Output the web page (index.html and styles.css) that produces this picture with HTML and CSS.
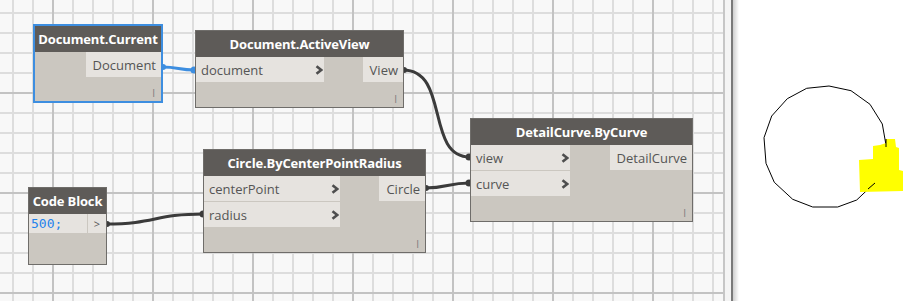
FILE: index.html
```html
<!DOCTYPE html>
<html lang="en">
<head>
<meta charset="utf-8">
<title>Dynamo graph</title>
<link rel="stylesheet" href="styles.css">
</head>
<body>
<div class="app">
  <div class="canvas">
    <svg class="wires" width="723" height="301" viewBox="0 0 723 301">
      <g fill="none" stroke-width="3" stroke-linecap="round">
        <path class="wire-sel" d="M162,67 C179,67 178,70 195,70"/>
        <path class="wire" d="M403,70 C450,70 425,157 470,157"/>
        <path class="wire" d="M425,188 C448,188 447,183 470,183"/>
        <path class="wire" d="M106,224 C156,224 154,214 204,214"/>
      </g>
      <g class="knob-sel">
        <circle cx="163" cy="67" r="3"/>
        <circle cx="194" cy="70" r="3.5"/>
      </g>
      <g class="knob">
        <circle cx="404" cy="70" r="3"/>
        <circle cx="469" cy="157" r="3.5"/>
        <circle cx="426" cy="188" r="3"/>
        <circle cx="469" cy="183" r="3.5"/>
        <circle cx="107" cy="224" r="3"/>
        <circle cx="203" cy="214" r="3.5"/>
      </g>
    </svg>

    <div class="node selected n-current">
      <div class="head">Document.Current</div>
      <div class="ports">
        <div class="inputs"></div>
        <div class="outputs"><div class="out">Document</div></div>
      </div>
      <div class="lace">I</div>
    </div>

    <div class="node n-view">
      <div class="head">Document.ActiveView</div>
      <div class="ports">
        <div class="inputs w128">
          <div class="in"><span>document</span><svg class="chev" width="8" height="10" viewBox="0 0 8 10"><path d="M1.5,1.2 L6.3,5 L1.5,8.8"/></svg></div>
        </div>
        <div class="outputs"><div class="out">View</div></div>
      </div>
      <div class="lace">I</div>
    </div>

    <div class="node n-detail">
      <div class="head">DetailCurve.ByCurve</div>
      <div class="ports">
        <div class="inputs w99">
          <div class="in"><span>view</span><svg class="chev" width="8" height="10" viewBox="0 0 8 10"><path d="M1.5,1.2 L6.3,5 L1.5,8.8"/></svg></div>
          <div class="in"><span>curve</span><svg class="chev" width="8" height="10" viewBox="0 0 8 10"><path d="M1.5,1.2 L6.3,5 L1.5,8.8"/></svg></div>
        </div>
        <div class="outputs"><div class="out">DetailCurve</div></div>
      </div>
      <div class="lace">I</div>
    </div>

    <div class="node n-code">
      <div class="head">Code Block</div>
      <div class="code-row">
        <div class="code">500;</div>
        <div class="code-out">&gt;</div>
      </div>
    </div>

    <div class="node n-circle">
      <div class="head">Circle.ByCenterPointRadius</div>
      <div class="ports">
        <div class="inputs w136">
          <div class="in"><span>centerPoint</span><svg class="chev" width="8" height="10" viewBox="0 0 8 10"><path d="M1.5,1.2 L6.3,5 L1.5,8.8"/></svg></div>
          <div class="in"><span>radius</span><svg class="chev" width="8" height="10" viewBox="0 0 8 10"><path d="M1.5,1.2 L6.3,5 L1.5,8.8"/></svg></div>
        </div>
        <div class="outputs"><div class="out">Circle</div></div>
      </div>
      <div class="lace">I</div>
    </div>
  </div>
  <div class="gutter"></div>
  <div class="splitter"></div>
  <div class="shadow"></div>
  <div class="preview">
    <svg class="view3d" width="171" height="301" viewBox="739 0 171 301">
      <polygon class="geom" points="829,86 851,90.7 870,104.3 882.3,124 885.7,143.3 887,163 875,182.7 856.7,200 837.7,207 812.7,207 792.7,199.3 774.3,182.3 766,163.3 764,137.7 771.7,116 787.3,98.7 806.7,88.3"/>
      <polygon class="hilite" points="886,139 895,139 896,147 899,148 899,170 903,171 903,191 860,192 859,160 873,159 873,146 880,145 886,143"/>
      <line class="geom" x1="875" y1="183" x2="868" y2="189"/>
      <line class="geom" x1="886" y1="139" x2="886" y2="147"/>
    </svg>
  </div>
</div>
</body>
</html>
```

FILE: styles.css
```css
html, body {
  margin: 0;
  padding: 0;
  background: #ffffff;
}

body {
  font-family: "Open Sans", "DejaVu Sans", sans-serif;
  width: 910px;
  height: 301px;
  overflow: hidden;
}

.app {
  display: flex;
  width: 910px;
  height: 301px;
}

.canvas {
  position: relative;
  flex: 0 0 723px;
  height: 301px;
  box-sizing: content-box;
  border-right: 2px solid #c6c6c6;
  background-color: #f8f8f8;
  background-image:
    linear-gradient(to right, #c3c3c3 2px, transparent 2px),
    linear-gradient(to bottom, #c3c3c3 2px, transparent 2px),
    linear-gradient(to right, #dddddd 2px, transparent 2px),
    linear-gradient(to bottom, #dddddd 2px, transparent 2px);
  background-size: 100px 100%, 100% 100px, 20px 100%, 100% 20px;
  background-position: 52px 0, 0 92px, 12px 0, 0 12px;
  overflow: hidden;
}

.gutter {
  flex: 0 0 6px;
  background: #f4f4f4;
}

.splitter {
  flex: 0 0 2px;
  background: #7a7a7a;
}

.shadow {
  flex: 0 0 6px;
  background: linear-gradient(to right, #cfcfcf, #ffffff);
}

.preview {
  flex: 1;
  background: #ffffff;
}

.view3d {
  display: block;
}

.geom {
  fill: none;
  stroke: #000000;
  stroke-width: 1;
}

.hilite {
  fill: #ffff00;
  stroke: none;
}

/* wires */
.wires {
  position: absolute;
  left: 0;
  top: 0;
}

.wire {
  stroke: #3b3b3b;
}

.wire-sel {
  stroke: #3d8ee0;
}

.knob circle {
  fill: #3b3b3b;
}

.knob-sel circle {
  fill: #3d8ee0;
}

/* nodes */
.node {
  position: absolute;
  box-sizing: border-box;
  display: flex;
  flex-direction: column;
  background: #cbc7c0;
  border: 1px solid #6f6d6a;
}

.node.selected {
  border: 2px solid #3d8ee0;
}

.n-current { left: 33px; top: 24px; width: 130px; height: 79px; }
.n-view    { left: 195px; top: 30px; width: 209px; height: 78px; }
.n-detail  { left: 470px; top: 118px; width: 223px; height: 104px; }
.n-code    { left: 28px; top: 187px; width: 79px; height: 78px; }
.n-circle  { left: 203px; top: 149px; width: 223px; height: 104px; }

.head {
  flex: 0 0 26px;
  display: flex;
  align-items: center;
  justify-content: center;
  background: #5e5b58;
  color: #ffffff;
  font-weight: 700;
  font-size: 13px;
  white-space: nowrap;
  letter-spacing: -0.15px;
}

.ports {
  display: flex;
  justify-content: space-between;
  align-items: flex-start;
}

.inputs {
  display: flex;
  flex-direction: column;
  gap: 1px;
}

.w128 { width: 128px; }
.w99  { width: 99px; }
.w136 { width: 136px; }

.in {
  height: 25px;
  box-sizing: border-box;
  display: flex;
  align-items: center;
  justify-content: space-between;
  padding: 0 1px 0 5px;
  background: #e6e3df;
  color: #555555;
  font-size: 13px;
  white-space: nowrap;
}

.chev path {
  fill: none;
  stroke: #4e4e4e;
  stroke-width: 2.6;
  stroke-linejoin: miter;
}

.outputs {
  display: flex;
  flex-direction: column;
}

.out {
  height: 25px;
  box-sizing: border-box;
  display: flex;
  align-items: center;
  justify-content: flex-end;
  padding: 0 5px 0 7px;
  background: #e6e3df;
  color: #555555;
  font-size: 13px;
  white-space: nowrap;
}

.lace {
  margin-top: auto;
  align-self: flex-end;
  padding: 0 6px 2px 0;
  font-size: 10px;
  line-height: 12px;
  color: #7c7c7c;
}

/* code block */
.code-row {
  display: flex;
  height: 19px;
  background: #e6e3df;
}

.code {
  flex: 1;
  display: flex;
  align-items: center;
  padding-left: 2px;
  font-family: "DejaVu Sans Mono", "Liberation Mono", monospace;
  font-size: 13px;
  color: #1f82ec;
}

.code-out {
  flex: 0 0 18px;
  display: flex;
  align-items: center;
  justify-content: center;
  border-left: 1px solid #cbc7c0;
  color: #555555;
  font-size: 11px;
}
```
